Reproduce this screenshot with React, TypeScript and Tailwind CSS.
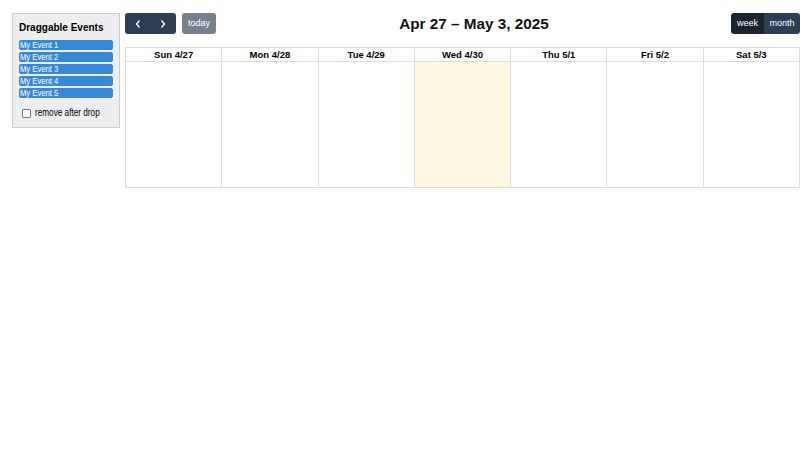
const days = ['Sun 4/27', 'Mon 4/28', 'Tue 4/29', 'Wed 4/30', 'Thu 5/1', 'Fri 5/2', 'Sat 5/3']
const todayIndex = 3
const events = ['My Event 1', 'My Event 2', 'My Event 3', 'My Event 4', 'My Event 5']

function Chevron({ dir }: { dir: 'left' | 'right' }) {
  return (
    <svg width="10" height="10" viewBox="0 0 10 10" fill="none" stroke="currentColor" strokeWidth="1.3">
      {dir === 'left' ? <path d="M6.5 1.5 L3.5 5 L6.5 8.5" /> : <path d="M3.5 1.5 L6.5 5 L3.5 8.5" />}
    </svg>
  )
}

function ExternalEvents() {
  return (
    <div className="w-[108px] shrink-0 self-start border border-[#ccc] bg-[#eee] px-[6px] pb-[8px] pt-[8px]">
      <h4 className="mb-[6px] text-[10px] font-bold leading-[12px] text-black">Draggable Events</h4>
      <div className="flex flex-col gap-[2px]">
        {events.map((e) => (
          <div
            key={e}
            className="h-[10px] rounded-[2px] border border-[#3788d8] bg-[#3788d8] text-[8.5px] leading-[8px] text-white"
          >
            <span className="inline-block origin-left scale-x-[0.9]">{e}</span>
          </div>
        ))}
      </div>
      <label className="mt-[9px] flex items-center gap-[4px] pl-[3px] text-[10px] leading-[12px] text-black">
        <span className="inline-block h-[9px] w-[9px] shrink-0 rounded-[1px] border border-[#767676] bg-white" />
        <span className="origin-left scale-x-[0.82] whitespace-nowrap">remove after drop</span>
      </label>
    </div>
  )
}

function Toolbar() {
  return (
    <div className="flex h-[21px] items-center justify-between">
      <div className="flex items-center gap-[6px]">
        <div className="flex h-[21px] overflow-hidden rounded-[3px] bg-[#2c3e50] text-white">
          <button className="flex w-[25px] items-center justify-center">
            <Chevron dir="left" />
          </button>
          <button className="flex w-[26px] items-center justify-center">
            <Chevron dir="right" />
          </button>
        </div>
        <button className="h-[21px] w-[34px] rounded-[3px] bg-[#2c3e50]/65 text-[9px] text-white">today</button>
      </div>
      <h2 className="absolute left-[474px] -translate-x-1/2 text-[15.3px] font-bold leading-[21px] text-[#111]">
        Apr 27 – May 3, 2025
      </h2>
      <div className="flex h-[21px] overflow-hidden rounded-[3px] text-[9px] text-white">
        <button className="w-[33px] bg-[#1a252f]">week</button>
        <button className="w-[36px] bg-[#2c3e50]">month</button>
      </div>
    </div>
  )
}

function Calendar() {
  return (
    <div className="flex-1">
      <Toolbar />
      <div className="mt-[13px] grid grid-cols-7 border-l border-t border-[#ddd]">
        {days.map((d) => (
          <div
            key={d}
            className="h-[14px] border-b border-r border-[#ddd] text-center text-[9.5px] font-bold leading-[13px] text-black"
          >
            {d}
          </div>
        ))}
        {days.map((d, i) => (
          <div
            key={d + 'b'}
            className={`h-[126px] border-b border-r border-[#ddd] ${i === todayIndex ? 'bg-[#fef8e0]' : 'bg-white'}`}
          />
        ))}
      </div>
    </div>
  )
}

export default function App() {
  return (
    <div
      className="relative flex h-[450px] w-[800px] gap-[5px] bg-white pl-[12px] pt-[13px]"
      style={{ fontFamily: '"Liberation Sans", Arial, sans-serif' }}
    >
      <ExternalEvents />
      <Calendar />
    </div>
  )
}
